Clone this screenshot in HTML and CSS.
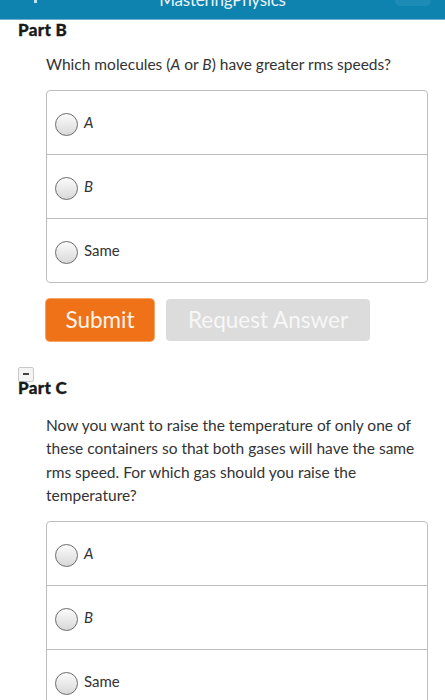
FILE: index.html
```html
<!DOCTYPE html>
<html>
<head>
<meta charset="utf-8">
<link rel="stylesheet" href="styles.css">
</head>
<body>
<header class="topbar">
  <span class="dot"></span>
  <span class="brand">MasteringPhysics</span>
  <span class="topbtn"></span>
</header>
<main class="content">
  <section class="part">
    <h2 class="part-title">Part B</h2>
    <div class="part-body">
      <p class="question">Which molecules (<i>A</i> or <i>B</i>) have greater rms speeds?</p>
      <div class="options">
        <label class="option"><span class="radio"></span><span class="opt-label"><i>A</i></span></label>
        <label class="option"><span class="radio"></span><span class="opt-label"><i>B</i></span></label>
        <label class="option"><span class="radio"></span><span class="opt-label">Same</span></label>
      </div>
      <div class="actions">
        <button class="btn btn-submit">Submit</button>
        <button class="btn btn-request">Request Answer</button>
      </div>
    </div>
  </section>
  <section class="part part-c">
    <div class="part-head">
      <span class="collapse"><span class="minus"></span></span>
      <h2 class="part-title">Part C</h2>
    </div>
    <div class="part-body">
      <p class="question">Now you want to raise the temperature of only one of these containers so that both gases will have the same rms speed. For which gas should you raise the temperature?</p>
      <div class="options">
        <label class="option"><span class="radio"></span><span class="opt-label"><i>A</i></span></label>
        <label class="option"><span class="radio"></span><span class="opt-label"><i>B</i></span></label>
        <label class="option"><span class="radio"></span><span class="opt-label">Same</span></label>
      </div>
    </div>
  </section>
</main>
</body>
</html>
```

FILE: styles.css
```css
html, body {
  margin: 0;
  padding: 0;
  background: #ffffff;
}
body {
  font-family: Lato, "Open Sans", "Liberation Sans", sans-serif;
  color: #2b2b2b;
  width: 445px;
  height: 700px;
  overflow: hidden;
}
.topbar {
  position: relative;
  height: 19px;
  background: #0f83af;
  border-bottom: 1px solid #6fb0cc;
  overflow: hidden;
  display: flex;
  justify-content: center;
}
.brand {
  color: #e9f3f8;
  font-size: 17px;
  line-height: 17px;
  margin-top: -9px;
  letter-spacing: -0.2px;
}
.dot {
  position: absolute;
  left: 34px;
  top: 0;
  width: 3px;
  height: 3px;
  background: #bfe4f2;
}
.topbtn {
  position: absolute;
  right: 14px;
  top: -14px;
  width: 36px;
  height: 20px;
  border-radius: 5px;
  background: #1c8cb6;
}
.content {
  padding: 0 17px 0 18px;
}
.part-title {
  margin: 0;
  font-size: 17px;
  font-weight: 900;
  color: #1a1a1a;
  line-height: 20px;
  letter-spacing: 0.3px;
  -webkit-text-stroke: 0.3px #1a1a1a;
}
.part-body {
  padding-left: 28px;
}
.question {
  margin: 0;
  font-size: 15.5px;
  line-height: 23.5px;
  color: #333;
  width: 392px;
}
.part:first-child .question {
  padding-top: 13px;
}
.options {
  margin-top: 13px;
  border: 1px solid #bdbdbd;
  border-radius: 4px;
  width: 380px;
}
.option {
  display: flex;
  align-items: center;
  height: 63px;
  padding-left: 8px;
  border-top: 1px solid #bdbdbd;
}
.option:first-child {
  border-top: none;
}
.radio {
  width: 23px;
  height: 23px;
  border-radius: 50%;
  border: 1px solid #6b6b6b;
  background: linear-gradient(#fbfbfb, #d9d9d9);
  margin-top: 5px;
  box-sizing: border-box;
  flex: none;
}
.opt-label {
  margin-left: 6px;
  font-size: 15px;
  color: #333;
}
.actions {
  display: flex;
  gap: 12px;
  margin-top: 16px;
}
.btn {
  height: 42px;
  border: none;
  border-radius: 4px;
  font-family: Lato, "Open Sans", "Liberation Sans", sans-serif;
  font-size: 22.5px;
  color: #ffffff;
  padding: 0;
}
.btn-submit {
  width: 108px;
  background: #ef7118;
  box-shadow: 0 0 0 1px #f3a565;
  color: #fff4ea;
}
.btn-request {
  width: 204px;
  background: #dcdcdc;
  color: #f7f7f7;
}
.part-c {
  margin-top: 28px;
}
.part-head {
  position: relative;
}
.collapse {
  position: absolute;
  left: 0;
  top: -2px;
  width: 14px;
  height: 13px;
  border: 1px solid #c9c9c9;
  border-radius: 2px;
  background: #f4f4f4;
  display: flex;
  align-items: center;
  justify-content: center;
}
.minus {
  width: 6px;
  height: 2px;
  background: #444;
}
.part-c .part-title {
  position: relative;
  padding-top: 9px;
}
.part-c .question {
  padding-top: 16px;
}
.part-c .options {
  margin-top: 13px;
}
```
